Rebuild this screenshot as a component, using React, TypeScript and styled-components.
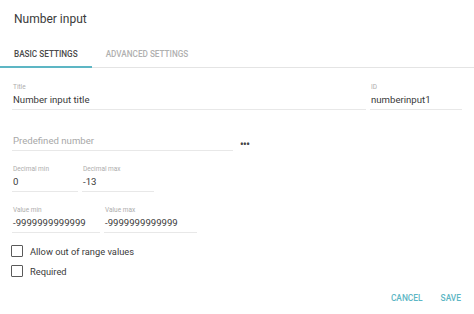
import styled, { createGlobalStyle } from 'styled-components';

const GlobalStyle = createGlobalStyle`
    body {
        margin: 0;
        background: #fff;
        font-family: Roboto, "Liberation Sans", Arial, sans-serif;
    }
`
const Dialog = styled.div`
    width: 474px;
    height: 314px;
    display: flex;
    flex-direction: column;
    background: #fff;
    color: #3a3a3a;
`
const Heading = styled.div`
    font-size: 12px;
    line-height: 18px;
    padding: 10px 14px 0;
    color: #3a3a3a;
`
const Tabs = styled.div`
    display: flex;
    margin-top: 10px;
    border-bottom: 1px solid #e4e4e4;
`
const Tab = styled.div<{ $active?: boolean }>`
    font-size: 8.2px;
    font-weight: 500;
    line-height: 12px;
    padding: 10px 14px 6px;
    color: ${p => (p.$active ? '#4a4a4a' : '#b0b0b0')};
    border-bottom: 2px solid ${p => (p.$active ? '#5db6c4' : 'transparent')};
    margin-bottom: -1px;
`
const Form = styled.div`
    display: flex;
    flex-direction: column;
    padding: 15px 12px 0;
    gap: 14px;
`
const Row = styled.div`
    display: flex;
    align-items: flex-end;
    gap: 4px;
`
const Field = styled.div<{ $w: number }>`
    width: ${p => p.$w}px;
    display: flex;
    flex-direction: column;
    border-bottom: 1px solid #e8e8e8;
`
const Label = styled.div`
    font-size: 6.5px;
    line-height: 9px;
    color: #adadad;
    padding-left: 1px;
    height: 9px;
`
const Value = styled.div<{ $placeholder?: boolean }>`
    font-size: 9.6px;
    line-height: 14px;
    padding: 1px 0 2px 1px;
    color: ${p => (p.$placeholder ? '#a8a8a8' : '#3a3a3a')};
`
const More = styled.div`
    font-size: 10px;
    font-weight: 700;
    color: #444;
    letter-spacing: -0.5px;
    line-height: 10px;
    padding: 0 0 1px 3px;
`
const Checks = styled.div`
    display: flex;
    flex-direction: column;
    gap: 8px;
    padding: 12px 11px 0;
`
const CheckRow = styled.label`
    display: flex;
    align-items: center;
    gap: 7px;
    font-size: 9.3px;
    color: #3a3a3a;
`
const Box = styled.span`
    width: 10px;
    height: 10px;
    border: 1px solid #5a5a5a;
    border-radius: 1px;
`
const Actions = styled.div`
    display: flex;
    justify-content: flex-end;
    gap: 18px;
    padding: 16px 13px 0;
`
const Button = styled.div`
    font-size: 8.4px;
    font-weight: 500;
    color: #5db6c4;
`

const App = (): JSX.Element => {
    return (
        <Dialog>
            <GlobalStyle />
            <Heading>Number input</Heading>
            <Tabs>
                <Tab $active>BASIC SETTINGS</Tab>
                <Tab>ADVANCED SETTINGS</Tab>
            </Tabs>
            <Form>
                <Row>
                    <Field $w={354}>
                        <Label>Title</Label>
                        <Value>Number input title</Value>
                    </Field>
                    <Field $w={92}>
                        <Label>ID</Label>
                        <Value>numberinput1</Value>
                    </Field>
                </Row>
                <Row>
                    <Field $w={221}>
                        <Label />
                        <Value $placeholder>Predefined number</Value>
                    </Field>
                    <More>•••</More>
                </Row>
                <Row>
                    <Field $w={66}>
                        <Label>Decimal min</Label>
                        <Value>0</Value>
                    </Field>
                    <Field $w={72}>
                        <Label>Decimal max</Label>
                        <Value>-13</Value>
                    </Field>
                </Row>
                <Row>
                    <Field $w={88}>
                        <Label>Value min</Label>
                        <Value>-9999999999999</Value>
                    </Field>
                    <Field $w={93}>
                        <Label>Value max</Label>
                        <Value>-9999999999999</Value>
                    </Field>
                </Row>
            </Form>
            <Checks>
                <CheckRow><Box />Allow out of range values</CheckRow>
                <CheckRow><Box />Required</CheckRow>
            </Checks>
            <Actions>
                <Button>CANCEL</Button>
                <Button>SAVE</Button>
            </Actions>
        </Dialog>
    )
}
export default App;
